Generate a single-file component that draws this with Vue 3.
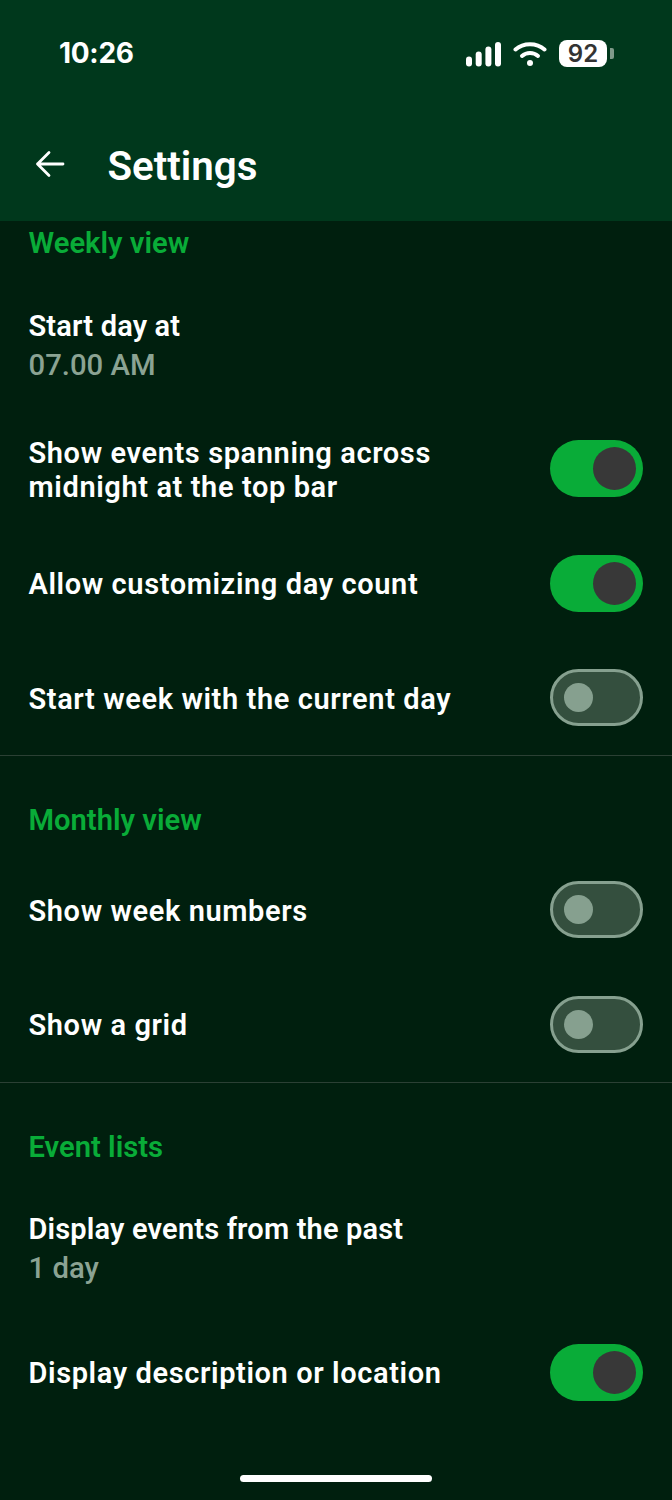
<script setup>
const weekly = [
  { id: "start", title: "Start day at", value: "07.00 AM" },
  { id: "midnight", title: "Show events spanning across midnight at the top bar", on: true },
  { id: "count", title: "Allow customizing day count", on: true },
  { id: "current", title: "Start week with the current day", on: false }
];
const monthly = [
  { id: "numbers", title: "Show week numbers", on: false },
  { id: "grid", title: "Show a grid", on: false }
];
const lists = [
  { id: "past", title: "Display events from the past", value: "1 day" },
  { id: "desc", title: "Display description or location", on: true }
];
const sections = [
  { name: "Weekly view", rows: weekly },
  { name: "Monthly view", rows: monthly },
  { name: "Event lists", rows: lists }
];
</script>

<template>
  <div class="screen">
    <header class="header">
      <div class="status">
        <span class="clock">10:26</span>
        <div class="status-icons">
          <svg width="35" height="25" viewBox="0 0 35 25" class="signal">
            <rect x="0" y="14.5" width="6" height="10" rx="3" fill="#fff" />
            <rect x="9.7" y="9.5" width="6" height="15" rx="3" fill="#fff" />
            <rect x="19.4" y="4.5" width="6" height="20" rx="3" fill="#fff" />
            <rect x="29" y="0" width="6" height="24.5" rx="3" fill="#fff" />
          </svg>
          <svg width="34" height="26" viewBox="0 0 34 26" class="wifi">
            <path d="M2.5 9.5C10.5 2.5 23.5 2.5 31.5 9.5" fill="none" stroke="#fff" stroke-width="4" stroke-linecap="round" />
            <path d="M9 16C13.5 12 20.5 12 25 16" fill="none" stroke="#fff" stroke-width="4" stroke-linecap="round" />
            <circle cx="17" cy="23" r="3" fill="#fff" />
          </svg>
          <div class="battery">
            <span class="battery-body">92</span>
            <span class="battery-cap"></span>
          </div>
        </div>
      </div>
      <div class="toolbar">
        <svg class="back" width="30" height="28" viewBox="0 0 30 28">
          <path d="M28 14H2.5M14 2.5L2.5 14L14 25.5" fill="none" stroke="#fff" stroke-width="2.8" stroke-linecap="round" stroke-linejoin="round" />
        </svg>
        <h1 class="title">Settings</h1>
      </div>
    </header>

    <main class="content">
      <section v-for="section in sections" :key="section.name" class="section">
        <h2 class="section-title">{{ section.name }}</h2>
        <div
          v-for="row in section.rows"
          :key="row.id"
          class="row"
          :class="{ tall: row.value }"
        >
          <div class="row-text">
            <div class="row-title">{{ row.title }}</div>
            <div v-if="row.value" class="row-value">{{ row.value }}</div>
          </div>
          <div v-if="row.on !== undefined" class="switch" :class="{ on: row.on }">
            <span class="thumb"></span>
          </div>
        </div>
      </section>
    </main>

    <div class="home-bar"></div>
  </div>
</template>

<style scoped>
.screen {
  position: relative;
  width: 672px;
  height: 1500px;
  overflow: hidden;
  background: #001f0e;
  font-family: Roboto, "Liberation Sans", sans-serif;
  color: #fff;
}
.header {
  height: 221px;
  background: #00381c;
}
.status {
  display: flex;
  justify-content: space-between;
  align-items: center;
  height: 106px;
  padding: 0 58px 0 59px;
}
.clock {
  font-family: Inter, Roboto, sans-serif;
  font-size: 28px;
  font-weight: 700;
  letter-spacing: -0.3px;
}
.status-icons {
  display: flex;
  align-items: center;
  gap: 12px;
}
.signal {
  margin-top: 2px;
}
.battery {
  display: flex;
  align-items: center;
  gap: 3px;
}
.battery-body {
  width: 48px;
  height: 27px;
  border-radius: 8px;
  background: #fff;
  color: #333;
  font-family: Inter, Roboto, sans-serif;
  font-size: 24px;
  font-weight: 600;
  line-height: 27px;
  text-align: center;
}
.battery-cap {
  width: 4px;
  height: 11px;
  border-radius: 0 2px 2px 0;
  background: #7f9a8a;
}
.toolbar {
  display: flex;
  align-items: center;
  height: 115px;
  padding-left: 35px;
}
.title {
  margin: 0 0 0 42.5px;
  font-size: 40.3px;
  font-weight: 600;
  line-height: 44px;
  padding-top: 7px;
}
.back {
  margin-top: 1px;
}
.content {
  padding-top: 5px;
}
.section {
  border-bottom: 1px solid #2b4034;
}
.section:last-child {
  border-bottom: none;
}
.section + .section .section-title {
  padding-top: 47px;
}
.section-title {
  margin: 0;
  padding: 0 28.5px 15.75px;
  color: #09ac38;
  font-size: 29.2px;
  font-weight: 600;
  line-height: 34px;
}
.row {
  display: flex;
  align-items: center;
  justify-content: space-between;
  height: 114.5px;
  padding: 0 29px 0 28.5px;
}
.row.tall {
  height: 133.5px;
  margin-top: 2.2px;
}
.row-text {
  max-width: 480px;
  padding-top: 2px;
}
.row.tall .row-text {
  padding-top: 1px;
}
.row-title {
  font-size: 29px;
  font-weight: 600;
  letter-spacing: 0.61px;
  line-height: 34px;
}
.row.tall .row-title {
  letter-spacing: 0.17px;
}
.row-value {
  margin-top: 5px;
  color: #8ba393;
  font-size: 29.3px;
  font-weight: 500;
  line-height: 34px;
}
.switch {
  display: flex;
  align-items: center;
  flex-shrink: 0;
  box-sizing: border-box;
  width: 93px;
  height: 57px;
  border: 3px solid #86a08f;
  border-radius: 29px;
  background: #344f3e;
  padding-left: 11px;
}
.thumb {
  width: 29px;
  height: 29px;
  border-radius: 50%;
  background: #86a08f;
}
.switch.on {
  justify-content: flex-end;
  border: none;
  background: #09ac38;
  padding: 0 7px 0 0;
}
.switch.on .thumb {
  width: 43px;
  height: 43px;
  background: #383838;
}
.home-bar {
  position: absolute;
  left: 240px;
  bottom: 18px;
  width: 192px;
  height: 7px;
  border-radius: 4px;
  background: #fff;
}
</style>
